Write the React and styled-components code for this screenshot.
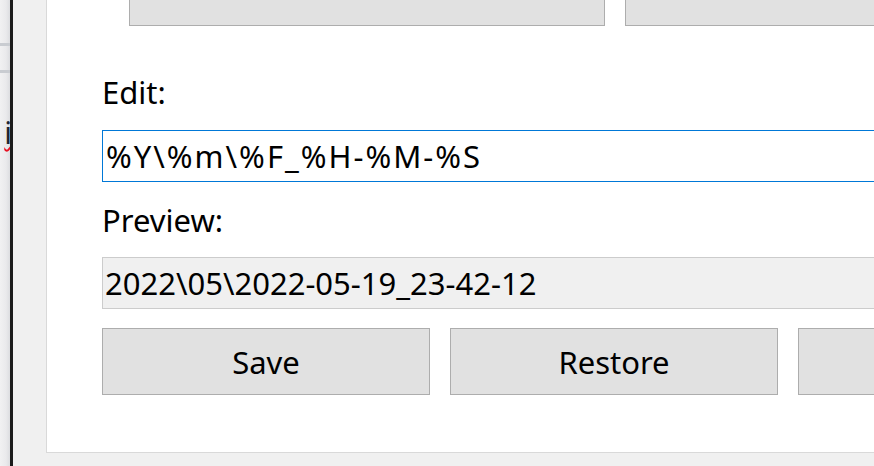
import styled, { createGlobalStyle } from "styled-components";

const GlobalStyle = createGlobalStyle`
html, body {
  margin: 0;
  padding: 0;
  overflow: hidden;
}
body {
  font-family: "Noto Sans", "Open Sans", sans-serif;
  color: #000;
}
`;

const Screen = styled.div`
display: flex;
width: 874px;
height: 466px;
overflow: hidden;
`;

const BackWindow = styled.div`
width: 10px;
flex: 0 0 auto;
background: linear-gradient(to right, #f1f1f2 0%, #eaeaec 60%, #dcdde0 100%);
display: flex;
flex-direction: column;
overflow: hidden;
`;

const BackLine = styled.div`
height: 3px;
background: #c9ccd1;
margin-top: ${(p) => p.$top}px;
`;

const BackWord = styled.div`
margin-top: 40px;
display: flex;
justify-content: flex-end;
margin-right: -2px;
font-size: 30px;
line-height: 40px;
color: #1c2433;
text-decoration: underline wavy #e81123;
text-decoration-thickness: 2px;
white-space: nowrap;
`;

const Separator = styled.div`
width: 3px;
flex: 0 0 auto;
background: #1b1b1b;
`;

const Window = styled.div`
flex: 1;
background: #f0f0f0;
padding: 0 0 13px 33px;
display: flex;
`;

const Panel = styled.div`
flex: 1;
background: #fff;
border-left: 1px solid #d9d9d9;
border-bottom: 1px solid #d9d9d9;
padding: 0 0 57px 55px;
display: flex;
flex-direction: column;
overflow: hidden;
`;

const TopRow = styled.div`
display: flex;
gap: 20px;
height: 26px;
padding-left: 27px;
margin-bottom: 46px;
`;

const TopButton = styled.div`
flex: 0 0 auto;
width: ${(p) => p.$width}px;
background: #e1e1e1;
border: 1px solid #adadad;
border-top: none;
box-sizing: border-box;
`;

const Label = styled.div`
font-size: 31px;
line-height: 40px;
height: 40px;
margin-bottom: ${(p) => p.$gap}px;
white-space: nowrap;
`;

const Field = styled.div`
height: 52px;
box-sizing: border-box;
margin-right: -4px;
border: 1px solid ${(p) => (p.$focused ? "#0078d7" : "#cccccc")};
border-right: none;
background: ${(p) => (p.$focused ? "#fff" : "#f0f0f0")};
display: flex;
align-items: center;
padding-left: ${(p) => (p.$focused ? 3 : 2)}px;
font-size: 31px;
letter-spacing: ${(p) => p.$spacing || 0}px;
white-space: nowrap;
margin-bottom: ${(p) => p.$gap}px;
`;

const ButtonRow = styled.div`
display: flex;
gap: 20px;
`;

const Button = styled.div`
flex: 0 0 auto;
width: 328px;
height: 67px;
box-sizing: border-box;
background: #e1e1e1;
border: 1px solid #adadad;
display: flex;
align-items: center;
justify-content: center;
font-size: 31px;
`;

export default function App() {
  return (
    <>
      <GlobalStyle />
      <Screen>
        <BackWindow>
          <BackLine $top={43} />
          <BackLine $top={24} />
          <BackWord>i</BackWord>
        </BackWindow>
        <Separator />
        <Window>
          <Panel>
            <TopRow>
              <TopButton $width={476} />
              <TopButton $width={300} />
            </TopRow>
            <Label $gap={18}>Edit:</Label>
            <Field $focused $spacing={2} $gap={18}>%Y\%m\%F_%H-%M-%S</Field>
            <Label $gap={17}>Preview:</Label>
            <Field $gap={19}>2022\05\2022-05-19_23-42-12</Field>
            <ButtonRow>
              <Button>Save</Button>
              <Button>Restore</Button>
              <Button />
            </ButtonRow>
          </Panel>
        </Window>
      </Screen>
    </>
  );
}
